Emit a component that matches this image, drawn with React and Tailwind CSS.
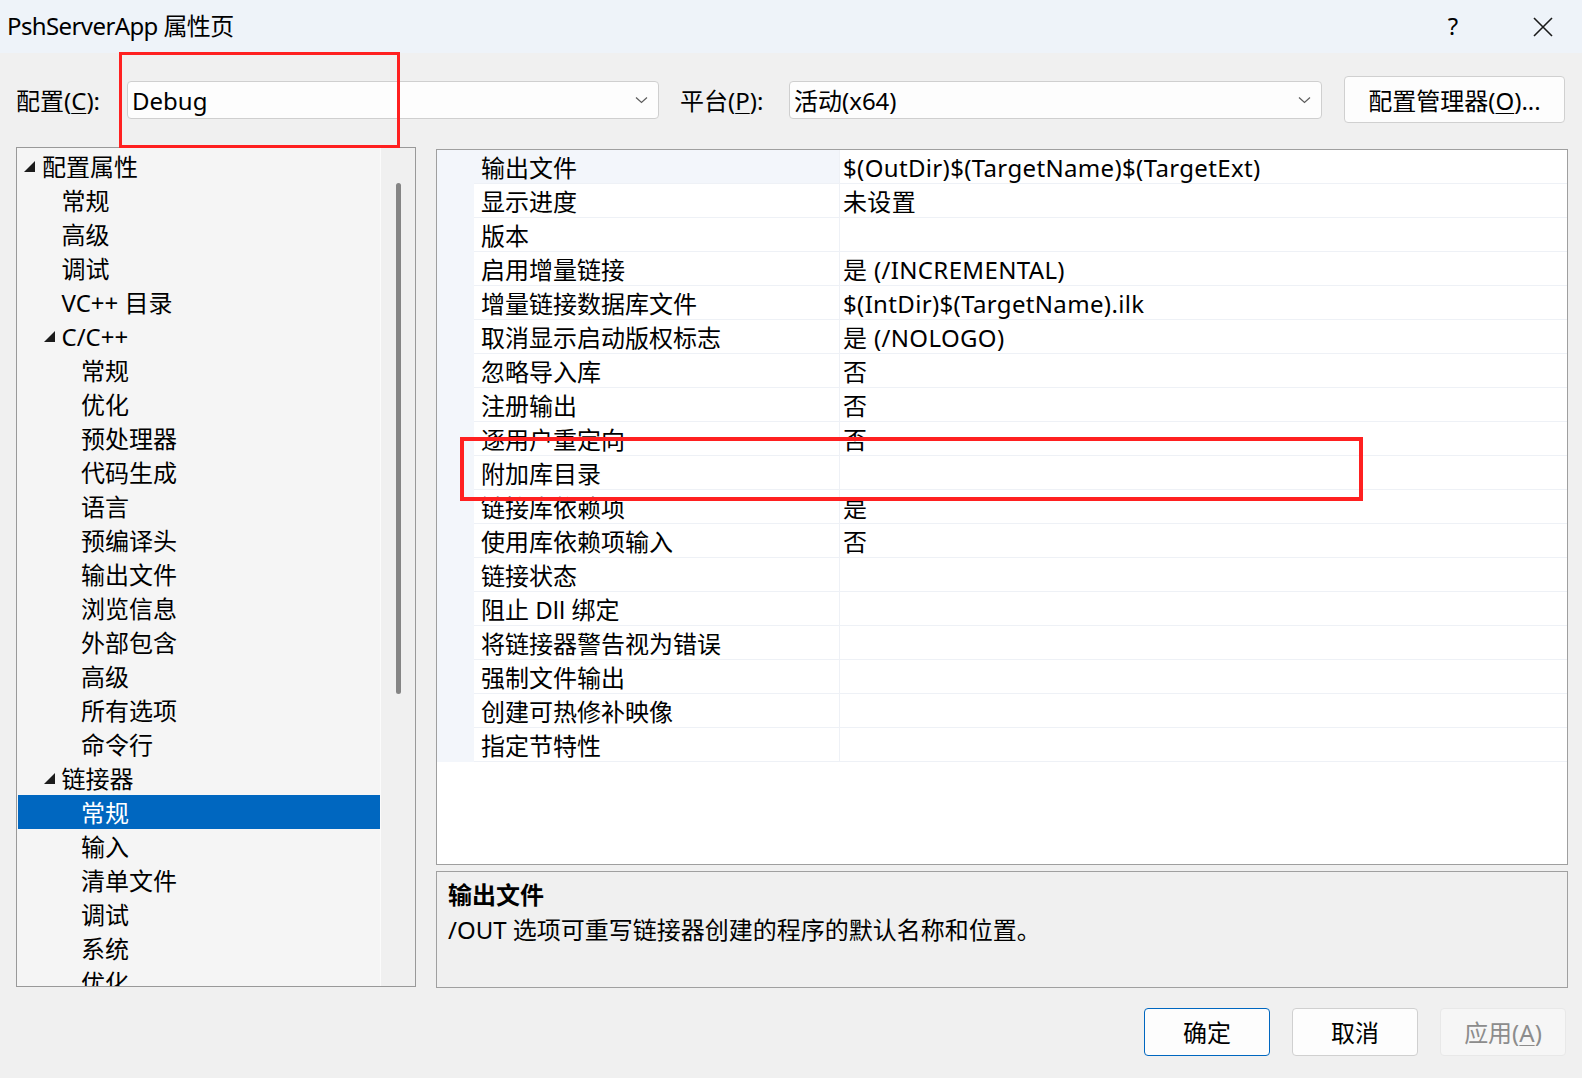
import React from 'react';

const treeItems = [
  { label: '配置属性', level: 0, open: true },
  { label: '常规', level: 1 },
  { label: '高级', level: 1 },
  { label: '调试', level: 1 },
  { label: 'VC++ 目录', level: 1 },
  { label: 'C/C++', level: 1, open: true },
  { label: '常规', level: 2 },
  { label: '优化', level: 2 },
  { label: '预处理器', level: 2 },
  { label: '代码生成', level: 2 },
  { label: '语言', level: 2 },
  { label: '预编译头', level: 2 },
  { label: '输出文件', level: 2 },
  { label: '浏览信息', level: 2 },
  { label: '外部包含', level: 2 },
  { label: '高级', level: 2 },
  { label: '所有选项', level: 2 },
  { label: '命令行', level: 2 },
  { label: '链接器', level: 1, open: true },
  { label: '常规', level: 2, selected: true },
  { label: '输入', level: 2 },
  { label: '清单文件', level: 2 },
  { label: '调试', level: 2 },
  { label: '系统', level: 2 },
  { label: '优化', level: 2 },
];

const props = [
  ['输出文件', '$(OutDir)$(TargetName)$(TargetExt)'],
  ['显示进度', '未设置'],
  ['版本', ''],
  ['启用增量链接', '是 (/INCREMENTAL)'],
  ['增量链接数据库文件', '$(IntDir)$(TargetName).ilk'],
  ['取消显示启动版权标志', '是 (/NOLOGO)'],
  ['忽略导入库', '否'],
  ['注册输出', '否'],
  ['逐用户重定向', '否'],
  ['附加库目录', ''],
  ['链接库依赖项', '是'],
  ['使用库依赖项输入', '否'],
  ['链接状态', ''],
  ['阻止 Dll 绑定', ''],
  ['将链接器警告视为错误', ''],
  ['强制文件输出', ''],
  ['创建可热修补映像', ''],
  ['指定节特性', ''],
];

const indent = ['pl-[6px]', 'pl-[25.5px]', 'pl-[45px]'];

const Chevron = () => (
  <svg width="13" height="8" viewBox="0 0 13 8" className="shrink-0">
    <path d="M1 1.5 L6.5 6.5 L12 1.5" fill="none" stroke="#5c5c5c" strokeWidth="1.2" />
  </svg>
);

const Expander = () => (
  <svg width="11" height="11" viewBox="0 0 11 11">
    <polygon points="11,0 11,11 0,11" fill="#1c1c1c" />
  </svg>
);

const Key = ({ children }) => <span className="underline underline-offset-[3px] decoration-1">{children}</span>;

const Combo = ({ value, width }) => (
  <div className={`${width} h-[38px] flex items-center justify-between pl-[4px] pr-[10px] bg-[#fdfdfd] border border-[#cfcfcf] rounded-[4px]`}>
    <span className="pt-[3px]">{value}</span>
    <Chevron />
  </div>
);

const Button = ({ children, variant = 'normal' }) => {
  const styles = {
    primary: 'border-[#0067c0] text-black bg-[#fdfdfd]',
    normal: 'border-[#d0d0d0] text-black bg-[#fdfdfd]',
    disabled: 'border-[#e8e8e8] text-[#8c8c8c] bg-[#f6f6f6]',
  };
  return (
    <div className={`w-[126px] h-[48px] flex items-center justify-center pt-[2px] rounded-[4px] border ${styles[variant]}`}>
      {children}
    </div>
  );
};

export default function App() {
  return (
    <div className="relative w-[1582px] h-[1078px] overflow-hidden bg-[#f0f0f0] text-black text-[24px] font-['Noto_Sans','Noto_Sans_CJK_SC',sans-serif]">
      {/* title bar */}
      <div className="h-[53px] bg-[#eef3f9] flex items-center pl-[7px]">
        <span className="flex-1 leading-none tracking-[-0.6px] pb-[2px]">PshServerApp 属性页</span>
        <span className="w-[30px] text-center mr-[65px] pb-[2px]">?</span>
        <svg width="20" height="20" viewBox="0 0 20 20" className="mr-[29px]">
          <path d="M1 1 L19 19 M19 1 L1 19" stroke="#1a1a1a" strokeWidth="1.6" />
        </svg>
      </div>

      {/* configuration / platform row */}
      <div className="mt-[23px] h-[47px] flex items-center pl-[16px]">
        <span className="w-[111px] pt-[3px]">配置(<Key>C</Key>):</span>
        <Combo value="Debug" width="w-[532px]" />
        <span className="ml-[21px] w-[109px] pt-[3px]">平台(<Key>P</Key>):</span>
        <Combo value="活动(x64)" width="w-[533px]" />
        <div className="ml-[22px] w-[221px] h-[47px] flex items-center justify-center pt-[3px] bg-[#fdfdfd] border border-[#d0d0d0] rounded-[4px]">
          <span>配置管理器(<Key>O</Key>)...</span>
        </div>
      </div>

      <div className="mt-[24px] flex pl-[16px]">
        {/* tree */}
        <div className="w-[400px] h-[840px] border border-[#999999] flex overflow-hidden">
          <div className="w-[363px] bg-[#f5f5f5] pt-[1px] pl-[1px] overflow-hidden">
            {treeItems.map((item, i) => (
              <div
                key={i}
                className={`h-[34px] flex items-center ${indent[item.level]} ${item.selected ? 'bg-[#0067c0] text-white' : ''}`}
              >
                <div className="w-[18px] flex items-center">{item.open && <Expander />}</div>
                <span className="leading-[35px] whitespace-nowrap">{item.label}</span>
              </div>
            ))}
          </div>
          <div className="w-[35px] bg-[#f0f0f0] border-l border-[#fbfbfb] flex justify-center pt-[35px]">
            <div className="w-[5px] h-[511px] rounded-full bg-[#858585]" />
          </div>
        </div>

        {/* properties + description */}
        <div className="ml-[20px] w-[1132px] flex flex-col">
          <div className="mt-[2px] h-[716px] bg-white border border-[#9f9f9f]">
            {props.map(([name, value], i) => (
              <div key={i} className="h-[34px] flex">
                <div className="w-[37px] bg-[#f3f6fb]" />
                <div className={`w-[366px] pl-[7px] leading-[35px] border-b border-r border-[#eef1f6] whitespace-nowrap overflow-hidden ${i === 0 ? 'bg-[#f3f6fb]' : ''}`}>
                  {name}
                </div>
                <div className="flex-1 pl-[3px] leading-[35px] tracking-[0.35px] border-b border-[#eef1f6] whitespace-nowrap overflow-hidden">{value}</div>
              </div>
            ))}
          </div>
          <div className="mt-[6px] h-[117px] border border-[#a0a0a0] bg-[#f0f0f0] pl-[11px] pt-[5px] leading-[35px]">
            <div className="font-bold">输出文件</div>
            <div>/OUT 选项可重写链接器创建的程序的默认名称和位置。</div>
          </div>
        </div>
      </div>

      {/* dialog buttons */}
      <div className="mt-[20px] flex justify-end gap-[22px] pr-[16px]">
        <Button variant="primary">确定</Button>
        <Button>取消</Button>
        <Button variant="disabled">应用(<Key>A</Key>)</Button>
      </div>

      {/* red annotation frames */}
      <div className="absolute left-[119px] top-[52px] w-[281px] h-[96px] border-[3px] border-[#ff2020]" />
      <div className="absolute left-[460px] top-[437px] w-[903px] h-[64px] border-[4px] border-[#ff2020]" />
    </div>
  );
}
